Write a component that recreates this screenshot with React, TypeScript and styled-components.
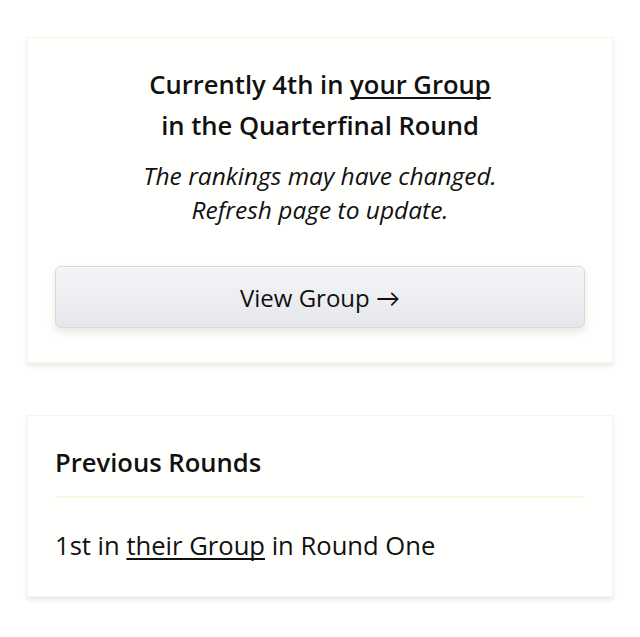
import React from "react";
import styled, { createGlobalStyle } from "styled-components";

const Global = createGlobalStyle`
  html, body { margin: 0; padding: 0; background: #ffffff; }
  body { font-family: "Open Sans", "Noto Sans", sans-serif; color: #111111; }
  * { box-sizing: border-box; }
`;

const Page = styled.div`
  padding: 37px 27px 20px 27px;
  display: flex;
  flex-direction: column;
  gap: 52px;
`;

const Card = styled.section<{ $pad: string }>`
  background: #fffffd;
  border: 1px solid #f6f6e4;
  box-shadow: 0 3px 5px rgba(0, 0, 0, 0.09);
  padding: ${(p) => p.$pad};
  display: flex;
  flex-direction: column;
`;

const Title = styled.h2`
  margin: 0;
  font-size: 25.6px;
  font-weight: 600;
  line-height: 41px;
  text-align: center;
  color: #111;
`;

const Link = styled.a`
  color: inherit;
  text-decoration: underline;
  text-underline-offset: 3px;
  text-decoration-thickness: 2px;
  text-decoration-skip-ink: none;
`;

const Note = styled.p`
  margin: 13px 0 0 0;
  font-size: 24.5px;
  font-style: italic;
  line-height: 34px;
  text-align: center;
  color: #111;
`;

const Button = styled.button`
  margin-top: 39px;
  height: 62px;
  width: 100%;
  border: 1px solid #d6d8dc;
  border-radius: 6px;
  background: linear-gradient(#f4f5f7, #e6e7ea);
  box-shadow: 0 4px 8px rgba(0, 0, 0, 0.1);
  font-family: inherit;
  font-size: 24px;
  color: #111;
  cursor: pointer;
`;

const Arrow = styled.span`
  font-family: Lato, sans-serif;
  font-size: 24px;
`;

const SectionTitle = styled.h3`
  margin: 0;
  font-size: 25.6px;
  font-weight: 600;
  line-height: 32px;
  color: #111;
`;

const Divider = styled.hr`
  border: none;
  height: 2px;
  background: #f8f8e0;
  margin: 17px 0 0 0;
`;

const Line = styled.p`
  margin: 32px 0 0 0;
  font-size: 25.6px;
  line-height: 32px;
  color: #111;
`;

export default function App() {
  return (
    <>
      <Global />
      <Page>
        <Card $pad="26px 27px 34px 27px">
          <Title>
            Currently 4th in <Link href="#">your Group</Link>
            <br />
            in the Quarterfinal Round
          </Title>
          <Note>
            The rankings may have changed.
            <br />
            Refresh page to update.
          </Note>
          <Button>
            View Group <Arrow>→</Arrow>
          </Button>
        </Card>
        <Card $pad="31px 27px 34px 27px">
          <SectionTitle>Previous Rounds</SectionTitle>
          <Divider />
          <Line>
            1st in <Link href="#">their Group</Link> in Round One
          </Line>
        </Card>
      </Page>
    </>
  );
}
